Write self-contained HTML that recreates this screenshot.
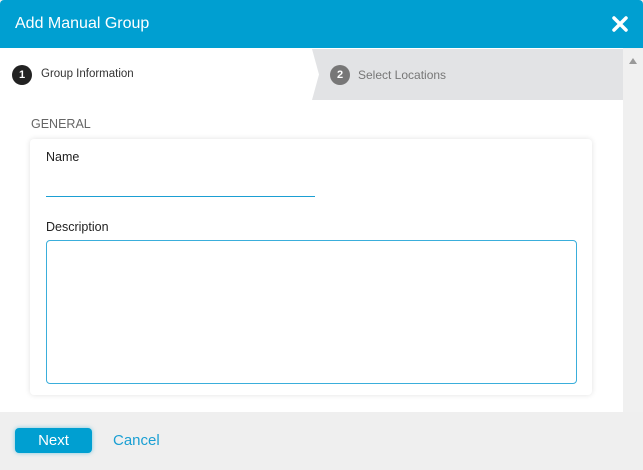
<!DOCTYPE html>
<html><head><style>
*{margin:0;padding:0;box-sizing:border-box}
body{width:643px;height:470px;background:#efefef;font-family:"Liberation Sans",sans-serif;position:relative;overflow:hidden}
.hdr{position:absolute;left:0;top:0;width:643px;height:48px;background:#009fd1;border-radius:4px 4px 0 0}
.hdr h1{position:absolute;left:15px;top:15px;color:#fff;font-size:16px;font-weight:normal}
.main{position:absolute;left:0;top:48px;width:623px;height:364px;background:#fff}
.scroll{position:absolute;left:623px;top:48px;width:20px;height:364px;background:#f0f0f0}
.step2{position:absolute;left:312px;top:49px;width:311px;height:51px;background:#e2e3e5;clip-path:polygon(0 0,100% 0,100% 100%,0 100%,7px 50%)}
.c{position:absolute;width:20px;height:20px;border-radius:50%;color:#fff;font-size:11px;text-align:center;line-height:20px;font-weight:bold}
.st{position:absolute;font-size:11.5px}
.card{position:absolute;left:30px;top:139px;width:562px;height:256px;background:#fff;border-radius:4px;box-shadow:0 0 6px rgba(0,0,0,.12)}
.lbl{position:absolute;font-size:12.5px;color:#222}
.btn{position:absolute;left:15px;top:428px;width:77px;height:25px;background:#009fd1;border-radius:4px;color:#fff;font-size:15px;text-align:center;line-height:26px;box-shadow:0 0 4px rgba(0,159,209,.5)}
</style></head><body>
<div class="hdr"><h1>Add Manual Group</h1>
<svg style="position:absolute;left:612px;top:16px" width="16" height="16" viewBox="0 0 16 16"><path d="M2 2L14 14M14 2L2 14" stroke="#fff" stroke-width="3.5" stroke-linecap="round"/></svg></div>
<div class="main"></div>
<div class="scroll"><svg style="position:absolute;left:6px;top:10px" width="8" height="6"><path d="M0 6L4 0L8 6Z" fill="#999"/></svg></div>
<div class="step2"></div>
<div class="c" style="left:12px;top:65px;background:#222">1</div>
<div class="st" style="left:41px;top:68px;color:#333">Group Information</div>
<div class="c" style="left:330px;top:65px;background:#777">2</div>
<div class="st" style="left:358px;top:68px;color:#777;font-size:12px">Select Locations</div>
<div style="position:absolute;left:31px;top:117px;font-size:12.5px;color:#666">GENERAL</div>
<div class="card"></div>
<div class="lbl" style="left:46px;top:150px">Name</div>
<div style="position:absolute;left:46px;top:196px;width:269px;height:1px;background:#1b9fd3"></div>
<div class="lbl" style="left:46px;top:220px">Description</div>
<div style="position:absolute;left:46px;top:240px;width:531px;height:144px;border:1px solid #3aaedb;border-radius:4px"></div>
<div class="btn">Next</div>
<div style="position:absolute;left:113px;top:432px;font-size:15px;color:#1a9fd3">Cancel</div>
</body></html>
